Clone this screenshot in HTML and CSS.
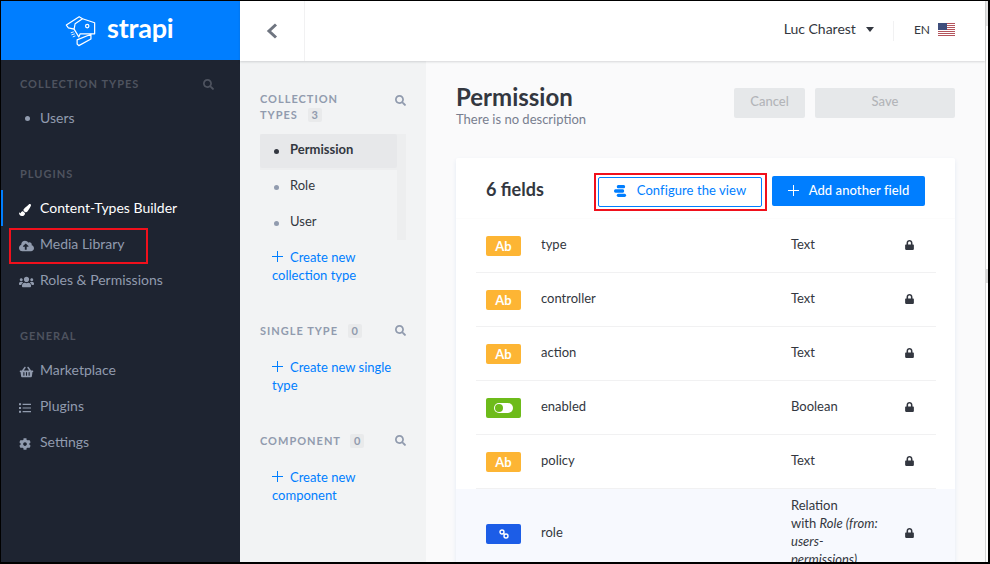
FILE: index.html
```html
<!DOCTYPE html>
<html lang="en">
<head>
<meta charset="utf-8">
<title>Strapi - Content-Types Builder</title>
<link rel="stylesheet" href="styles.css">
</head>
<body>
<svg class="defs" aria-hidden="true">
  <symbol id="i-search" viewBox="0 0 512 512"><path d="M505 442.7L405.3 343c-4.5-4.5-10.6-7-17-7H372c27.6-35.3 44-79.7 44-128C416 93.1 322.9 0 208 0S0 93.1 0 208s93.1 208 208 208c48.3 0 92.7-16.4 128-44v16.3c0 6.4 2.5 12.5 7 17l99.7 99.7c9.4 9.4 24.6 9.4 33.9 0l28.3-28.3c9.4-9.4 9.4-24.6.1-34zM208 336c-70.7 0-128-57.2-128-128 0-70.7 57.2-128 128-128 70.7 0 128 57.2 128 128 0 70.7-57.2 128-128 128z"/></symbol>
  <symbol id="i-lock" viewBox="0 0 448 512"><path d="M400 224h-24v-72C376 68.2 307.8 0 224 0S72 68.2 72 152v72H48c-26.5 0-48 21.5-48 48v192c0 26.5 21.5 48 48 48h352c26.5 0 48-21.5 48-48V272c0-26.5-21.5-48-48-48zm-104 0H152v-72c0-39.7 32.3-72 72-72s72 32.3 72 72v72z"/></symbol>
  <symbol id="i-brush" viewBox="0 0 512 512"><path d="M167.02 309.34c-40.12 2.58-76.53 17.86-97.19 72.3-2.35 6.21-8 9.98-14.59 9.98-11.11 0-45.46-27.67-55.25-34.35C0 439.62 37.93 512 128 512c75.86 0 128-43.77 128-120.19 0-3.11-.65-6.08-.97-9.13l-88.01-73.34zM457.89 0c-15.16 0-29.37 6.71-40.21 16.45C213.27 199.05 192 203.34 192 257.09c0 13.7 3.25 26.76 8.73 38.7l63.82 53.18c7.21 1.8 14.64 3.03 22.39 3.03 62.11 0 98.11-45.47 211.16-256.46 7.38-14.35 13.9-29.85 13.9-45.99C512 20.64 486 0 457.89 0z"/></symbol>
  <symbol id="i-cloud" viewBox="0 0 640 512"><path d="M537.6 226.6c4.1-10.7 6.4-22.4 6.4-34.6 0-53-43-96-96-96-19.7 0-38.1 6-53.3 16.2C367 64.2 315.3 32 256 32c-88.4 0-160 71.6-160 160 0 2.7.1 5.4.2 8.1C40.2 219.8 0 273.2 0 336c0 79.5 64.5 144 144 144h368c70.7 0 128-57.3 128-128 0-61.9-44-113.6-102.4-125.4zM393.4 288H328v112c0 8.8-7.2 16-16 16h-48c-8.8 0-16-7.2-16-16V288h-65.4c-14.3 0-21.4-17.2-11.3-27.3l105.4-105.4c6.2-6.2 16.4-6.2 22.6 0l105.4 105.4c10.1 10.1 2.9 27.3-11.3 27.3z"/></symbol>
  <symbol id="i-users" viewBox="0 0 640 512"><path d="M96 224c35.3 0 64-28.7 64-64s-28.7-64-64-64-64 28.7-64 64 28.7 64 64 64zm448 0c35.3 0 64-28.7 64-64s-28.7-64-64-64-64 28.7-64 64 28.7 64 64 64zm32 32h-64c-17.6 0-33.5 7.1-45.1 18.6 40.3 22.1 68.9 62 75.1 109.4h66c17.7 0 32-14.3 32-32v-32c0-35.3-28.7-64-64-64zm-256 0c61.9 0 112-50.1 112-112S381.9 32 320 32 208 82.1 208 144s50.1 112 112 112zm76.8 32h-8.3c-20.8 10-43.9 16-68.5 16s-47.6-6-68.5-16h-8.3C179.6 288 128 339.6 128 403.2V432c0 26.5 21.5 48 48 48h288c26.5 0 48-21.5 48-48v-28.8c0-63.6-51.6-115.2-115.2-115.2zm-223.7-13.4C161.5 263.1 145.6 256 128 256H64c-35.3 0-64 28.7-64 64v32c0 17.7 14.3 32 32 32h65.9c6.3-47.4 34.9-87.3 75.2-109.4z"/></symbol>
  <symbol id="i-basket" viewBox="0 0 576 512"><path d="M576 216v16c0 13.255-10.745 24-24 24h-8l-26.113 182.788C514.509 462.435 494.257 480 470.37 480H105.63c-23.887 0-44.139-17.565-47.518-41.212L32 256h-8c-13.255 0-24-10.745-24-24v-16c0-13.255 10.745-24 24-24h67.341l106.78-146.821c10.395-14.292 30.407-17.453 44.701-7.058 14.293 10.395 17.453 30.408 7.058 44.701L170.477 192h235.046L326.12 82.821c-10.395-14.292-7.234-34.306 7.059-44.701 14.291-10.395 34.306-7.235 44.701 7.058L484.659 192H552c13.255 0 24 10.745 24 24zM312 392V280c0-13.255-10.745-24-24-24s-24 10.745-24 24v112c0 13.255 10.745 24 24 24s24-10.745 24-24zm112 0V280c0-13.255-10.745-24-24-24s-24 10.745-24 24v112c0 13.255 10.745 24 24 24s24-10.745 24-24zm-224 0V280c0-13.255-10.745-24-24-24s-24 10.745-24 24v112c0 13.255 10.745 24 24 24s24-10.745 24-24z"/></symbol>
  <symbol id="i-list" viewBox="1 2.5 14 11"><path d="M1 2.5h2.4v2.4H1zM1 6.8h2.4v2.4H1zM1 11.1h2.4v2.4H1zM5.2 3h9.8v1.4H5.2zM5.2 7.3h9.8v1.4H5.2zM5.2 11.6h9.8v1.4H5.2z"/></symbol>
  <symbol id="i-cog" viewBox="0 0 512 512"><path d="M487.4 315.7l-42.6-24.6c4.3-23.2 4.3-47 0-70.2l42.6-24.6c4.9-2.8 7.1-8.6 5.5-14-11.1-35.6-30-67.8-54.7-94.6-3.8-4.1-10-5.1-14.8-2.3L380.8 110c-17.9-15.4-38.5-27.3-60.8-35.1V25.8c0-5.6-3.9-10.5-9.4-11.7-36.7-8.2-74.3-7.8-109.2 0-5.5 1.2-9.4 6.1-9.4 11.7V75c-22.2 7.9-42.8 19.8-60.8 35.1L88.7 85.5c-4.9-2.8-11-1.9-14.8 2.3-24.7 26.7-43.6 58.9-54.7 94.6-1.7 5.4.6 11.2 5.5 14L67.3 221c-4.3 23.2-4.3 47 0 70.2l-42.6 24.6c-4.9 2.8-7.1 8.6-5.5 14 11.1 35.6 30 67.8 54.7 94.6 3.8 4.1 10 5.1 14.8 2.3l42.6-24.6c17.9 15.4 38.5 27.3 60.8 35.1v49.2c0 5.6 3.9 10.5 9.4 11.7 36.7 8.2 74.3 7.8 109.2 0 5.5-1.2 9.4-6.1 9.4-11.7v-49.2c22.2-7.9 42.8-19.8 60.8-35.1l42.6 24.6c4.9 2.8 11 1.9 14.8-2.3 24.7-26.7 43.6-58.9 54.7-94.6 1.5-5.5-.7-11.3-5.6-14.1zM256 336c-44.1 0-80-35.9-80-80s35.9-80 80-80 80 35.9 80 80-35.9 80-80 80z"/></symbol>
</svg>

<div class="frame">
  <aside class="sidebar">
    <div class="brand">
      <svg class="logo" viewBox="195 42 92 95" fill="none" stroke="#fff" stroke-width="3.6" stroke-linejoin="round">
        <path d="M199 72L237 47L247 53L225 68L222 84L205 80Z"/>
        <path d="M247 53L283 65V98L240 98L236 107L222 84"/>
        <path d="M231 116L272 99V113L236 133L231 128Z"/>
        <circle cx="261" cy="75" r="5"/>
        <path d="M212 95L221 92M214 101L224 98M218 107L226 104" stroke-width="2.6"/>
      </svg>
      <span class="brand-name">strapi</span>
    </div>
    <nav class="nav">
      <div class="nav-head nav-head-first"><span>COLLECTION TYPES</span><svg class="nav-search"><use href="#i-search"/></svg></div>
      <a class="nav-item"><span class="nav-ic"><span class="nav-dot"></span></span>Users</a>

      <div class="nav-head">PLUGINS</div>
      <a class="nav-item nav-item-active"><span class="nav-ic"><svg class="ic-brush"><use href="#i-brush"/></svg></span>Content-Types Builder</a>
      <a class="nav-item"><span class="nav-ic"><svg class="ic-wide"><use href="#i-cloud"/></svg></span>Media Library</a>
      <a class="nav-item"><span class="nav-ic"><svg class="ic-wide"><use href="#i-users"/></svg></span>Roles &amp; Permissions</a>

      <div class="nav-head">GENERAL</div>
      <a class="nav-item"><span class="nav-ic"><svg class="ic-wide"><use href="#i-basket"/></svg></span>Marketplace</a>
      <a class="nav-item"><span class="nav-ic"><svg class="ic-list"><use href="#i-list"/></svg></span>Plugins</a>
      <a class="nav-item"><span class="nav-ic"><svg class="ic-cog"><use href="#i-cog"/></svg></span>Settings</a>
    </nav>
    <div class="mark mark-media"></div>
  </aside>

  <div class="app">
    <header class="topbar">
      <div class="back">
        <svg class="back-ic" viewBox="0 0 12 16" fill="none" stroke="#6f7580" stroke-width="3"><path d="M10 1.5L3 8l7 6.5"/></svg>
      </div>
      <div class="user">Luc Charest<span class="caret"></span></div>
      <div class="lang">
        <span>EN</span>
        <svg class="flag" viewBox="0 0 17 13">
          <rect width="17" height="13" fill="#fff"/>
          <path d="M0 .5h17M0 2.5h17M0 4.5h17M0 6.5h17M0 8.5h17M0 10.5h17M0 12.5h17" stroke="#b4545c"/>
          <rect width="9" height="7" fill="#3f4e7c"/>
        </svg>
      </div>
    </header>

    <div class="body">
      <section class="panel">
        <div class="panel-head">
          <h2>COLLECTION TYPES <span class="count">3</span></h2>
          <svg class="panel-search"><use href="#i-search"/></svg>
        </div>
        <div class="ct-list">
          <ul>
            <li class="ct ct-active"><span class="ct-dot"></span>Permission</li>
            <li class="ct"><span class="ct-dot"></span>Role</li>
            <li class="ct"><span class="ct-dot"></span>User</li>
          </ul>
        </div>
        <a class="create create-first"><span class="plus"></span>Create new collection type</a>

        <div class="panel-head panel-head-next">
          <h2>SINGLE TYPE <span class="count">0</span></h2>
          <svg class="panel-search"><use href="#i-search"/></svg>
        </div>
        <a class="create"><span class="plus"></span>Create new single type</a>

        <div class="panel-head panel-head-next">
          <h2>COMPONENT <span class="count">0</span></h2>
          <svg class="panel-search"><use href="#i-search"/></svg>
        </div>
        <a class="create"><span class="plus"></span>Create new component</a>
      </section>

      <main class="main">
        <div class="page-head">
          <div>
            <h1>Permission</h1>
            <p>There is no description</p>
          </div>
          <div class="page-actions">
            <button class="btn-off btn-cancel">Cancel</button>
            <button class="btn-off btn-save">Save</button>
          </div>
        </div>

        <div class="card">
          <div class="card-head">
            <h3>6 fields</h3>
            <button class="btn-outline">
              <svg class="cfg" viewBox="0 0 14 11" fill="#007eff" preserveAspectRatio="none"><rect x="3" y="0" width="9" height="3" rx="1.5"/><rect x="0" y="4" width="11" height="3" rx="1.5"/><rect x="3" y="8" width="10" height="3" rx="1.5"/></svg>
              Configure the view
              <span class="mark mark-config"></span>
            </button>
            <button class="btn-primary"><span class="plus-w"></span>Add another field</button>
          </div>

          <div class="row"><span class="badge badge-text">Ab</span><span class="name">type</span><span class="type">Text</span><svg class="lock"><use href="#i-lock"/></svg></div>
          <div class="row"><span class="badge badge-text">Ab</span><span class="name">controller</span><span class="type">Text</span><svg class="lock"><use href="#i-lock"/></svg></div>
          <div class="row"><span class="badge badge-text">Ab</span><span class="name">action</span><span class="type">Text</span><svg class="lock"><use href="#i-lock"/></svg></div>
          <div class="row"><span class="badge badge-bool"><span class="toggle"></span></span><span class="name">enabled</span><span class="type">Boolean</span><svg class="lock"><use href="#i-lock"/></svg></div>
          <div class="row"><span class="badge badge-text">Ab</span><span class="name">policy</span><span class="type">Text</span><svg class="lock"><use href="#i-lock"/></svg></div>
          <div class="row-tint">
            <div class="row row-last"><span class="badge badge-rel"><svg class="link" viewBox="0 0 10 10" fill="none" stroke="#fff" stroke-width="1.4"><circle cx="3" cy="3" r="2"/><circle cx="7" cy="7" r="2"/><path d="M4 4l2 2"/></svg></span><span class="name">role</span><span class="type">Relation<br>with <em>Role (from: users-permissions)</em></span><svg class="lock"><use href="#i-lock"/></svg></div>
          </div>
        </div>
      </main>
    </div>
  </div>

  <div class="gutter"><span class="thumb-top"></span><span class="thumb-mid"></span></div>
</div>
</body>
</html>
```

FILE: styles.css
```css
* { box-sizing: border-box; }
html, body { margin: 0; height: 100%; overflow: hidden; }
body { font-family: Lato, "Liberation Sans", sans-serif; font-size: 13px; color: #333740; background: #000; }
.defs { display: none; }
h1, h2, h3, p, ul { margin: 0; padding: 0; list-style: none; }
button { font-family: inherit; font-size: 13px; border: 0; padding: 0; }

.frame { width: 990px; height: 564px; display: flex; background: #fff; border-style: solid; border-color: #000; border-width: 1px 2px 2px 1px; overflow: hidden; }

/* Sidebar */
.sidebar { width: 239px; flex: none; background: #1e2431; position: relative; }
.brand { height: 59px; background: #007eff; display: flex; align-items: center; padding-left: 64px; gap: 11px; }
.logo { width: 31px; height: 32px; }
.brand-name { color: #fff; font-size: 27px; font-weight: 700; letter-spacing: -0.2px; line-height: 32px; position: relative; top: -3px; }
.nav { padding-top: 16px; }
.nav-head { height: 16px; line-height: 16px; margin: 30px 19px 8px; color: #4e535f; font-size: 11px; font-weight: 700; letter-spacing: 1px; display: flex; justify-content: space-between; align-items: center; }
.nav-head-first { margin-top: 0; padding-right: 7px; }
.nav-search { width: 11px; height: 11px; fill: #4e535f; }
.nav-item { display: flex; align-items: center; height: 36px; color: #919bae; font-size: 14px; padding: 0 0 2px 39px; position: relative; }
.nav-item-active { color: #fff; }
.nav-item-active::before { content: ""; position: absolute; left: 0; top: 0; bottom: 0; width: 2px; background: #007eff; }
.nav-ic { position: absolute; left: 18px; top: 0; width: 16px; height: 36px; display: flex; align-items: center; }
.nav-ic svg { fill: #919bae; margin-top: 4px; }
.nav-dot { width: 5px; height: 5px; border-radius: 50%; background: #919bae; margin-left: 6px; }
.ic-wide { width: 15px; height: 12px; }
.ic-brush { width: 12px; height: 12px; fill: #fff !important; }
.ic-list { width: 12px; height: 10px; }
.ic-cog { width: 12px; height: 12px; }

/* Top bar */
.app { width: 745px; flex: none; display: flex; flex-direction: column; }
.topbar { height: 60px; flex: none; background: #fff; display: flex; align-items: center; box-shadow: 0 1px 2px rgba(40,42,49,.16); position: relative; z-index: 1; }
.back { width: 65px; height: 60px; border-right: 1px solid #f1f1f2; display: flex; align-items: center; justify-content: center; flex: none; }
.back-ic { width: 12px; height: 16px; margin-right: 1px; }
.user { margin-left: auto; font-size: 14px; color: #333740; display: flex; align-items: center; height: 20px; padding: 0 19px 5px 0; border-right: 1px solid #f1f1f2; }
.caret { width: 0; height: 0; border-style: solid; border-width: 5px 4.5px 0; border-color: #333740 transparent transparent; margin-left: 10px; margin-top: 2px; }
.lang { display: flex; align-items: center; gap: 8px; font-size: 12px; padding: 0 30px 4px 20px; }
.flag { width: 17px; height: 13px; margin-top: 1px; }

.body { flex: 1; min-height: 0; display: flex; }

/* Content-type panel */
.panel { width: 186px; flex: none; background: #f2f3f4; padding: 30px 20px 0; }
.panel-head { display: flex; justify-content: space-between; align-items: flex-start; }
.panel-head-next { margin-top: 39px; }
.panel h2 { font-size: 11px; font-weight: 700; letter-spacing: 1px; line-height: 16px; color: #919bae; width: 115px; }
.count { display: inline-block; background: #e9eaeb; color: #919bae; border-radius: 2px; font-size: 11px; line-height: 14px; width: 14px; text-align: center; margin-left: 6px; letter-spacing: 0; }
.panel-search { width: 11px; height: 11px; fill: #919bae; margin-top: 4px; }
.panel-head-next .panel-search { margin-top: 2px; }
.ct-list { margin-top: 11px; width: 146px; background: #edeeef; height: 106px; }
.ct-list ul { width: 137px; }
.ct { height: 36px; line-height: 30px; padding-left: 30px; position: relative; color: #333740; font-size: 13px; background: #f2f3f4; }
.ct-active { height: 34px; margin-bottom: 2px; background: #e7e8ea; border-radius: 2px; font-weight: 700; }
.ct-dot { position: absolute; left: 14px; top: 15px; width: 5px; height: 5px; border-radius: 50%; background: #919bae; }
.ct-active .ct-dot { background: #333740; }
.create { display: block; color: #007eff; font-size: 13px; line-height: 18px; margin-top: 19px; padding-left: 12px; width: 146px; }
.create-first { margin-top: 8px; }
.plus, .plus-w { display: inline-block; width: 11px; height: 11px; background-repeat: no-repeat; background-position: center; background-size: 100% 1px, 1px 100%; }
.plus { background-image: linear-gradient(#007eff, #007eff), linear-gradient(#007eff, #007eff); margin-right: 7px; vertical-align: 0; }
.plus-w { background-image: linear-gradient(#fff, #fff), linear-gradient(#fff, #fff); }

/* Main */
.main { flex: 1; min-width: 0; background: #fafafb; padding: 21px 30px 0 30px; overflow: hidden; }
.page-head { display: flex; justify-content: space-between; align-items: flex-start; height: 76px; }
h1 { font-size: 24px; font-weight: 700; line-height: 30px; color: #333740; }
.page-head p { font-size: 13px; color: #787e8f; line-height: 15px; }
.page-actions { display: flex; gap: 10px; margin-top: 6px; }
.btn-off { height: 30px; background: #e6e8ea; color: #b3b5b9; border-radius: 2px; font-weight: 500; padding-bottom: 4px; }
.btn-cancel { width: 71px; }
.btn-save { width: 140px; }

.card { background: #fff; box-shadow: 0 2px 4px #e3e9f3; border-radius: 2px; width: 499px; }
.card-head { height: 61px; padding: 18px 30px 0; display: flex; align-items: flex-start; border-bottom: 1px solid #fcfcfc; }
.card-head h3 { font-size: 18px; font-weight: 700; line-height: 26px; margin-right: auto; color: #333740; }
.btn-outline { width: 164px; height: 30px; margin-top: 1px; margin-right: 10px; padding-bottom: 4px; background: #fff; color: #007eff; border: 1px solid #007eff; border-radius: 2px; display: flex; align-items: center; justify-content: center; gap: 10px; position: relative; letter-spacing: 0.08px; }
.cfg { width: 13px; height: 12px; margin-top: 1px; }
.btn-primary { width: 153px; height: 30px; padding-bottom: 2px; background: #007eff; color: #fff; border-radius: 2px; display: flex; align-items: center; justify-content: center; gap: 10px; font-weight: 500; letter-spacing: 0.08px; }

.row { display: flex; align-items: center; height: 54px; margin: 0 19px 0 20px; border-bottom: 1px solid #f1f1f2; padding-left: 10px; color: #333740; }
.row-tint { background: #f7f9fe; }
.row-last { height: 88px; border-bottom: 0; }
.badge { width: 35px; height: 20px; flex: none; border-radius: 2px; display: flex; align-items: center; justify-content: center; color: #fff; font-weight: 700; font-size: 13px; margin-top: 1px; }
.badge-text { background: #fdb534; }
.badge-bool { background: #6dbb1a; }
.badge-rel { background: #1c5de7; }
.toggle { width: 19px; height: 10px; border-radius: 5px; background: #fff; position: relative; }
.toggle::before { content: ""; position: absolute; left: 1px; top: 1px; width: 8px; height: 8px; border-radius: 50%; background: #6dbb1a; }
.link { width: 10px; height: 10px; }
.name { width: 250px; margin-left: 20px; flex: none; margin-top: -3px; }
.type { width: 90px; flex: none; line-height: 18px; margin-top: -3px; }
.lock { width: 9px; height: 10px; fill: #333740; margin-left: 24px; margin-top: -1px; flex: none; }

/* Annotation boxes */
.mark { position: absolute; border: 2px solid #f0101c; pointer-events: none; }
.mark-media { left: 8px; top: 227px; width: 139px; height: 36px; }
.mark-config { left: -5px; top: -5px; width: 173px; height: 38px; }

/* Window scrollbar */
.gutter { width: 3px; flex: none; box-shadow: inset 1px 0 0 #d6d6d6; display: flex; flex-direction: column; background: #fff; }
.thumb-top { height: 25px; background: #e4e4e4; margin-left: 1px; }
.thumb-mid { height: 14px; margin-top: 243px; background: #d8d8d8; margin-left: 1px; }
```
